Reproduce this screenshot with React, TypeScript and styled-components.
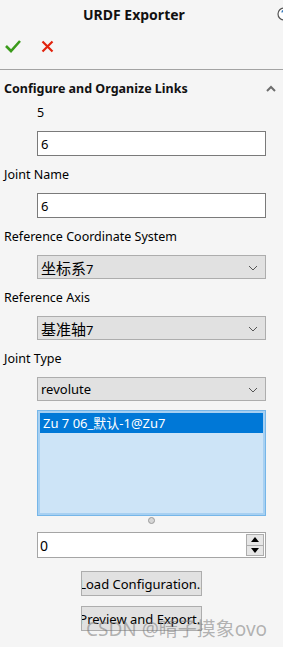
import React from "react";
import styled, { createGlobalStyle } from "styled-components";

const Global = createGlobalStyle`
  html, body { margin: 0; padding: 0; background: #f5f5f5; }
  body { font-family: "Noto Sans", "Noto Sans CJK SC", sans-serif; }
`;

const Page = styled.div`
  position: relative;
  width: 283px;
  height: 647px;
  overflow: hidden;
  background: #f5f5f5;
  color: #000;
  font-size: 12.5px;
`;

const Header = styled.div`
  display: flex;
  align-items: center;
  height: 28px;
  padding-left: 83px;
`;

const Title = styled.div`
  font-weight: 700;
  font-size: 14px;
  color: #111;
`;

const HelpIcon = styled.svg`
  margin-left: auto;
  margin-right: -8px;
  margin-top: -1px;
`;

const ActionRow = styled.div`
  display: flex;
  align-items: center;
  gap: 20px;
  height: 36px;
  padding-left: 5px;
  margin-bottom: 5px;
`;

const Divider = styled.div`
  height: 1px;
  background: #a3a3a3;
`;

const SectionHeader = styled.div`
  display: flex;
  align-items: center;
  justify-content: space-between;
  height: 33px;
  padding: 3px 7px 0 4px;
  box-sizing: border-box;
  font-weight: 700;
  font-size: 12.5px;
  color: #111;
`;

const Body = styled.div`
  display: flex;
  flex-direction: column;
  align-items: flex-start;
`;

const Label = styled.div<{ $indent?: boolean }>`
  height: 19px;
  line-height: 19px;
  margin-bottom: 9px;
  padding-left: ${(p) => (p.$indent ? "37px" : "4px")};
  white-space: nowrap;
`;

const TextBox = styled.div`
  box-sizing: border-box;
  margin-left: 37px;
  width: 229px;
  height: 25px;
  margin-bottom: 9px;
  border: 1px solid #7a7a7a;
  background: #fff;
  display: flex;
  align-items: center;
  padding-left: 3px;
  font-size: 13px;
`;

const Select = styled.div`
  box-sizing: border-box;
  margin-left: 37px;
  width: 229px;
  height: 24px;
  margin-bottom: 9px;
  border: 1px solid #adadad;
  background: #e1e1e1;
  display: flex;
  align-items: center;
  justify-content: space-between;
  padding: 0 7px 0 3px;
  font-size: 13px;
`;

const Cjk = styled.span`
  font-family: "Noto Sans CJK SC", sans-serif;
  font-size: 15px;
`;

const ListBox = styled.div`
  box-sizing: border-box;
  margin-left: 37px;
  width: 229px;
  height: 106px;
  border: 1px solid #76b6e8;
  box-shadow: inset 0 0 0 2px #a7d0f2;
  background: #cde4f7;
  padding: 2px;
`;

const ListItem = styled.div<{ $selected?: boolean }>`
  height: 20px;
  line-height: 20px;
  padding-left: 3px;
  font-size: 13px;
  color: ${(p) => (p.$selected ? "#fff" : "#000")};
  background: ${(p) => (p.$selected ? "#0078d7" : "transparent")};
  white-space: nowrap;
`;

const GripRow = styled.div`
  width: 283px;
  height: 16px;
  display: flex;
  justify-content: center;
  padding-left: 20px;
  box-sizing: border-box;
`;

const Grip = styled.div`
  width: 5px;
  height: 5px;
  margin-top: 1px;
  border-radius: 50%;
  border: 1px solid #9a9a9a;
  background: #d6d6d6;
`;

const SpinBox = styled.div`
  box-sizing: border-box;
  margin-left: 37px;
  width: 229px;
  height: 26px;
  margin-bottom: 13px;
  border: 1px solid #a5a5a5;
  background: #fff;
  display: flex;
  align-items: center;
  justify-content: space-between;
  padding: 0 1px 0 2px;
  font-size: 14px;
`;

const SpinButtons = styled.div`
  display: flex;
  flex-direction: column;
  width: 18px;
  height: 22px;
  border: 1px solid #adadad;
  box-sizing: border-box;
`;

const SpinButton = styled.div<{ $down?: boolean }>`
  flex: 1;
  display: flex;
  align-items: center;
  justify-content: center;
  background: #e6e6e6;
  border-top: ${(p) => (p.$down ? "1px solid #adadad" : "none")};
`;

const Button = styled.div`
  box-sizing: border-box;
  margin-left: 81px;
  width: 121px;
  height: 25px;
  border: 1px solid #adadad;
  background: #e1e1e1;
  display: flex;
  align-items: center;
  justify-content: center;
  overflow: hidden;
  white-space: nowrap;
  font-size: 13px;
  margin-bottom: 10px;
`;

const Watermark = styled.div`
  position: absolute;
  left: 86px;
  top: 614px;
  font-size: 19px;
  color: rgba(120, 120, 120, 0.55);
  font-family: "Noto Sans", "Noto Sans CJK SC", sans-serif;
  white-space: nowrap;
  pointer-events: none;
`;

const Chevron = ({ up }: { up?: boolean }) => (
  <svg width="10" height="7" viewBox="0 0 10 7">
    <path
      d={up ? "M1 6 L5 2 L9 6" : "M1 2 L5 6 L9 2"}
      fill="none"
      stroke={up ? "#6e6e6e" : "#555"}
      strokeWidth={up ? 2 : 1}
    />
  </svg>
);

const Tri = ({ down }: { down?: boolean }) => (
  <svg width="8" height="5" viewBox="0 0 8 5">
    <path d={down ? "M0 0 L8 0 L4 5 Z" : "M0 5 L8 5 L4 0 Z"} fill="#000" />
  </svg>
);

export default function App() {
  return (
    <>
      <Global />
      <Page>
        <Header>
          <Title>URDF Exporter</Title>
          <HelpIcon width="14" height="14" viewBox="0 0 14 14">
            <circle cx="7" cy="7" r="6" fill="#fff" stroke="#555" strokeWidth="1.2" />
            <path d="M5 5.5 Q5 3.5 7 3.5 Q9 3.5 9 5.3 Q9 6.5 7 7.3 L7 8.5" fill="none" stroke="#2a6fb5" strokeWidth="1.3" />
            <circle cx="7" cy="10.5" r="0.8" fill="#2a6fb5" />
          </HelpIcon>
        </Header>
        <ActionRow>
          <svg width="16" height="14" viewBox="0 0 16 14">
            <path d="M1 7 L6 12 L15 2" fill="none" stroke="#3b9b1b" strokeWidth="2.6" />
          </svg>
          <svg width="13" height="13" viewBox="0 0 13 13">
            <path d="M1.5 1.5 L11.5 11.5 M11.5 1.5 L1.5 11.5" fill="none" stroke="#e2230d" strokeWidth="2.2" />
          </svg>
        </ActionRow>
        <Divider />
        <SectionHeader>
          <span>Configure and Organize Links</span>
          <Chevron up />
        </SectionHeader>
        <Body>
          <Label $indent>5</Label>
          <TextBox>6</TextBox>
          <Label>Joint Name</Label>
          <TextBox>6</TextBox>
          <Label>Reference Coordinate System</Label>
          <Select>
            <span>
              <Cjk>坐标系</Cjk>7
            </span>
            <Chevron />
          </Select>
          <Label>Reference Axis</Label>
          <Select>
            <span>
              <Cjk>基准轴</Cjk>7
            </span>
            <Chevron />
          </Select>
          <Label>Joint Type</Label>
          <Select>
            <span>revolute</span>
            <Chevron />
          </Select>
          <ListBox>
            <ListItem $selected>Zu 7 06_默认-1@Zu7</ListItem>
          </ListBox>
          <GripRow>
            <Grip />
          </GripRow>
          <SpinBox>
            <span>0</span>
            <SpinButtons>
              <SpinButton>
                <Tri />
              </SpinButton>
              <SpinButton $down>
                <Tri down />
              </SpinButton>
            </SpinButtons>
          </SpinBox>
          <Button>Load Configuration..</Button>
          <Button>Preview and Export..</Button>
        </Body>
        <Watermark>CSDN @晴子摸象ovo</Watermark>
      </Page>
    </>
  );
}
